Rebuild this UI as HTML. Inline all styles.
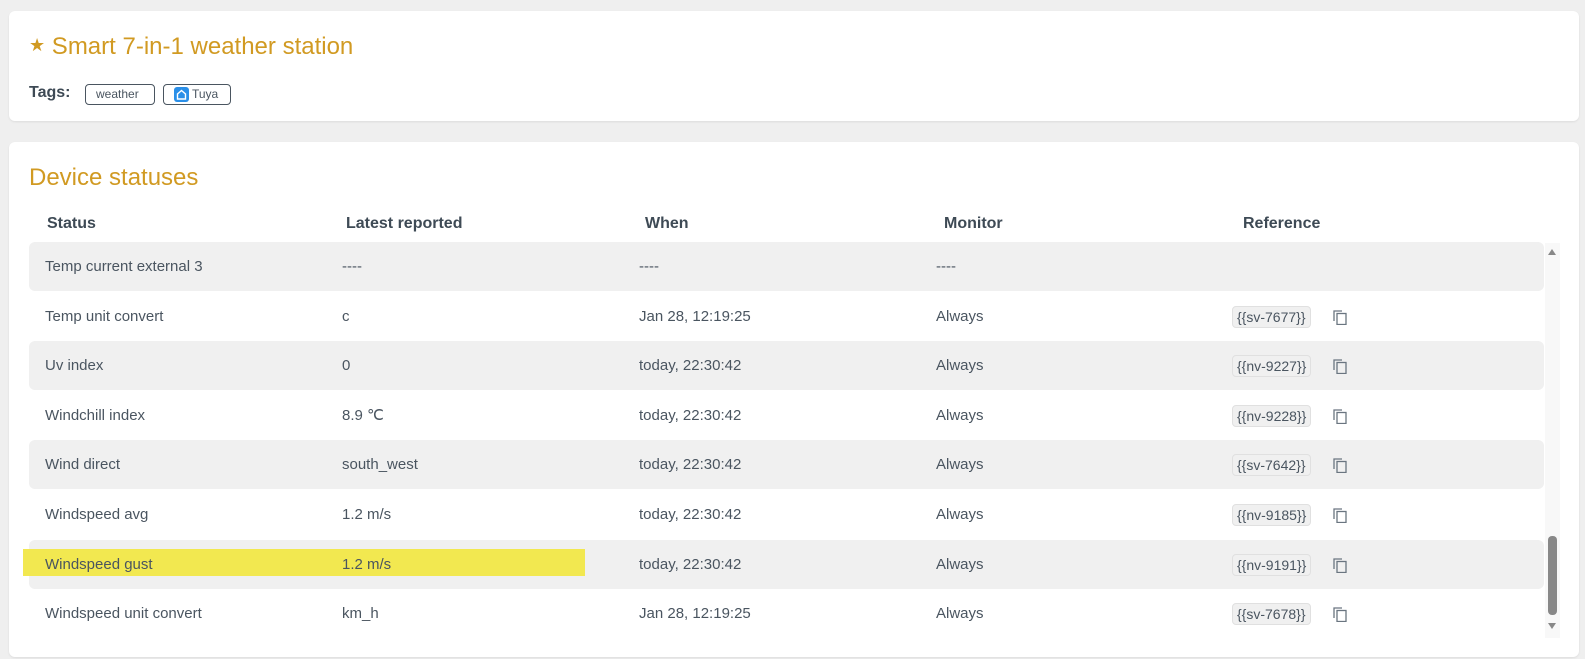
<!DOCTYPE html>
<html><head><meta charset="utf-8"><style>
body{margin:0;background:#efefef;font-family:"Liberation Sans",Arial,sans-serif;color:#4a5560;width:1585px;height:659px;overflow:hidden;position:relative}
.card{position:absolute;left:9px;width:1570px;background:#fff;border-radius:6px;box-shadow:0 1px 2px rgba(0,0,0,.08)}
.t{position:absolute;color:#d19a22;font-weight:300;white-space:nowrap}
.tag{position:absolute;top:84px;height:21px;border:1px solid #4a5560;border-radius:4px;font-size:12px;line-height:19px;box-sizing:border-box;padding:0 10px;color:#4a5560}
.h{position:absolute;top:215px;font-size:16px;font-weight:bold;color:#3e4a55}
.row{position:absolute;left:29px;width:1515px;height:49px;border-radius:6px}
.g{background:#f0f0f0}
.c{position:absolute;font-size:15px;line-height:49px;top:0;white-space:nowrap}
.pill{position:absolute;left:1203px;top:14px;height:20px;line-height:20px;font-size:14px;padding:0 4px;background:#f0f0f0;border:1px solid #e0e0e0;border-radius:4px}
.cp{position:absolute;left:1303px;top:17px}
.hl{position:absolute;left:23px;top:549px;width:562px;height:27px;background:#f2e850;z-index:2}
</style></head><body>
<div class="card" style="top:11px;height:110px"></div>
<div class="card" style="top:142px;height:515px"></div>
<div class="t" style="left:29px;top:33px;font-size:24px"><span style="font-size:18px;vertical-align:3px">★</span> Smart 7-in-1 weather station</div>
<div style="position:absolute;left:29px;top:84px;font-size:16px;font-weight:bold;color:#3e4a55">Tags:</div>
<div class="tag" style="left:85px;width:70px">weather</div>
<div class="tag" style="left:163px;width:68px;padding-left:28px">Tuya</div>
<svg style="position:absolute;left:174px;top:87px" width="15" height="15" viewBox="0 0 15 15"><rect width="15" height="15" rx="3" fill="#2a8fe8"/><path d="M3.5 12V7L7.5 3.5 11.5 7V12Z" fill="none" stroke="#fff" stroke-width="1.4"/></svg>
<div class="t" style="left:29px;top:164px;font-size:24px">Device statuses</div>
<div class="h" style="left:47px">Status</div><div class="h" style="left:346px">Latest reported</div><div class="h" style="left:645px">When</div><div class="h" style="left:944px">Monitor</div><div class="h" style="left:1243px">Reference</div>
<div class="hl"></div>
<div id="rows"></div>
<div style="position:absolute;left:1545px;top:243px;width:15px;height:395px;background:#f8f8f8"></div>
<div style="position:absolute;left:1548px;top:249px;border:4px solid transparent;border-bottom:6px solid #888;border-top:0"></div>
<div style="position:absolute;left:1548px;top:623px;border:4px solid transparent;border-top:6px solid #888;border-bottom:0"></div>
<div style="position:absolute;left:1548px;top:536px;width:9px;height:79px;background:#888;border-radius:4px"></div>
<script>
var d=[["Temp current external 3","----","----","----",""],["Temp unit convert","c","Jan 28, 12:19:25","Always","{{sv-7677}}"],["Uv index","0","today, 22:30:42","Always","{{nv-9227}}"],["Windchill index","8.9 ℃","today, 22:30:42","Always","{{nv-9228}}"],["Wind direct","south_west","today, 22:30:42","Always","{{sv-7642}}"],["Windspeed avg","1.2 m/s","today, 22:30:42","Always","{{nv-9185}}"],["Windspeed gust","1.2 m/s","today, 22:30:42","Always","{{nv-9191}}"],["Windspeed unit convert","km_h","Jan 28, 12:19:25","Always","{{sv-7678}}"]];
var h="";d.forEach(function(r,i){h+='<div class="row'+(i%2==0?' g':'')+'" style="top:'+Math.round(242+i*49.6)+'px">'+'<div class="c" style="left:16px;z-index:3">'+r[0]+'</div><div class="c" style="left:313px;z-index:3">'+r[1]+'</div><div class="c" style="left:610px">'+r[2]+'</div><div class="c" style="left:907px">'+r[3]+'</div>'+(r[4]?'<div class="pill">'+r[4]+'</div><svg class="cp" width="16" height="16" viewBox="0 0 16 16"><path d="M2 12V2h8" fill="none" stroke="#6a7580" stroke-width="1.3"/><rect x="5" y="4.5" width="9" height="11" fill="none" stroke="#6a7580" stroke-width="1.3"/></svg>':'')+'</div>'});
document.getElementById("rows").innerHTML=h;
</script>
</body></html>
